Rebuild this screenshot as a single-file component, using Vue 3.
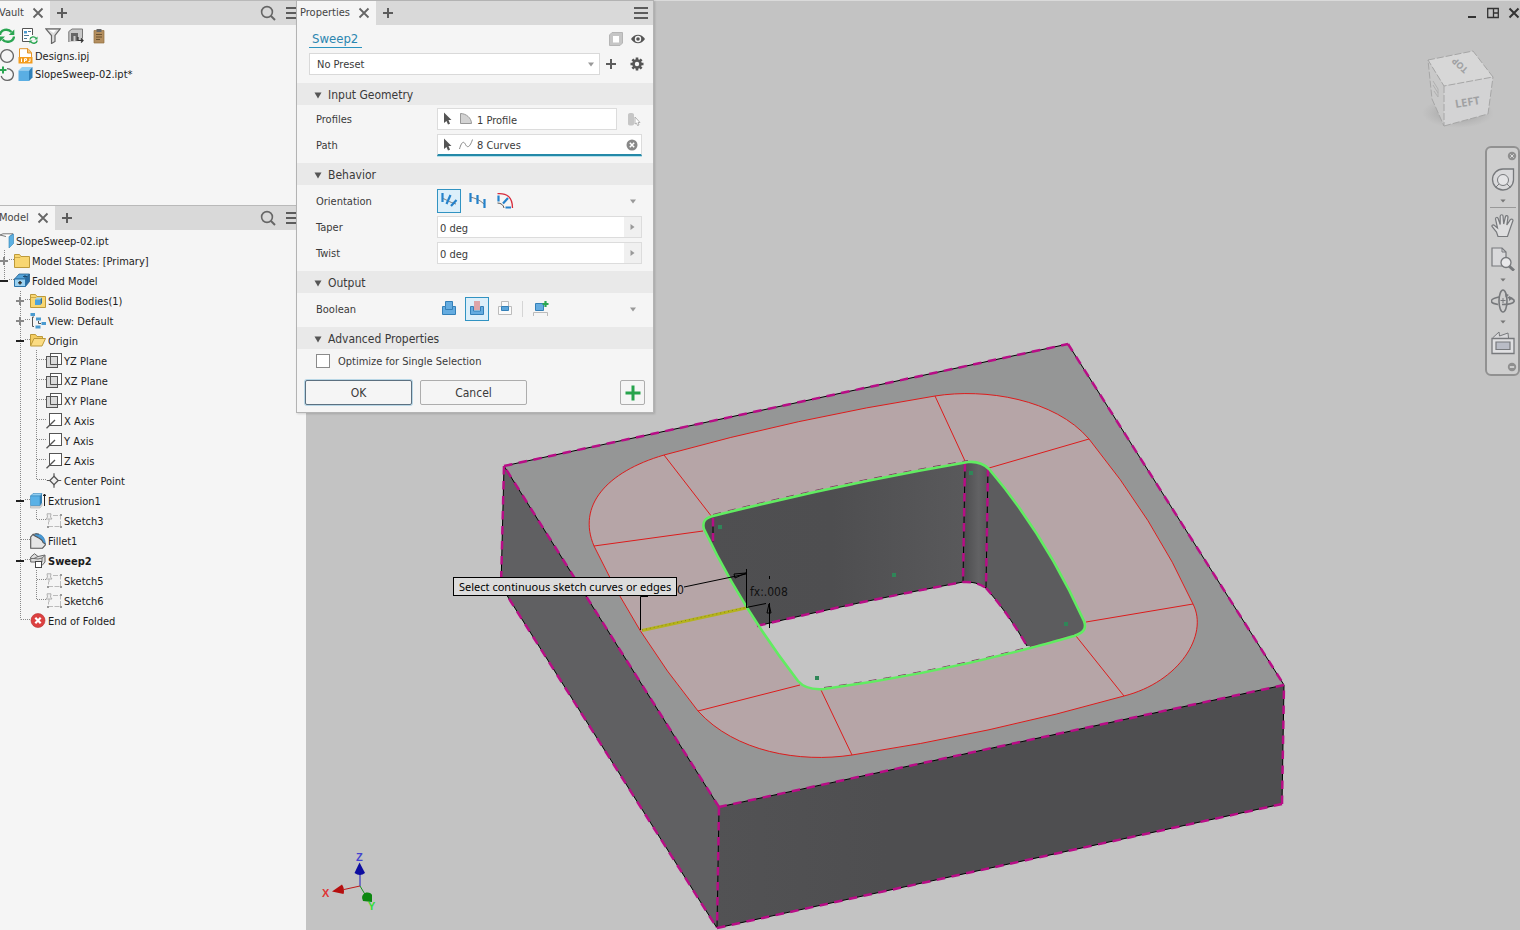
<script setup>
import { ref } from 'vue'

const preset = ref('No Preset')
const taper = ref('0 deg')
const twist = ref('0 deg')
const optimize = ref(false)
const orientation = ref('follow')
const operation = ref('cut')

const tree = [
  { level: 0, icon: 'part', label: 'SlopeSweep-02.ipt' },
  { level: 1, icon: 'folder', label: 'Model States: [Primary]', mark: 'plus' },
  { level: 1, icon: 'folded', label: 'Folded Model', mark: 'minus' },
  { level: 2, icon: 'bodies', label: 'Solid Bodies(1)', mark: 'plus' },
  { level: 2, icon: 'view', label: 'View: Default', mark: 'plus' },
  { level: 2, icon: 'open', label: 'Origin', mark: 'minus' },
  { level: 3, icon: 'plane', label: 'YZ Plane' },
  { level: 3, icon: 'plane', label: 'XZ Plane' },
  { level: 3, icon: 'plane', label: 'XY Plane' },
  { level: 3, icon: 'axis', label: 'X Axis' },
  { level: 3, icon: 'axis', label: 'Y Axis' },
  { level: 3, icon: 'axis', label: 'Z Axis' },
  { level: 3, icon: 'point', label: 'Center Point' },
  { level: 2, icon: 'extrude', label: 'Extrusion1', mark: 'minus' },
  { level: 3, icon: 'sketch', label: 'Sketch3' },
  { level: 2, icon: 'fillet', label: 'Fillet1' },
  { level: 2, icon: 'sweep', label: 'Sweep2', mark: 'minus', bold: true },
  { level: 3, icon: 'sketch', label: 'Sketch5' },
  { level: 3, icon: 'sketch', label: 'Sketch6' },
  { level: 2, icon: 'end', label: 'End of Folded' },
]

const edges = [
  'M504 466 1068 344',
  'M1068 344 1284 685',
  'M1284 685 719 807',
  'M719 807 504 466',
  'M504 466 501 586',
  'M501 586 717 928',
  'M719 807 717 928',
  'M717 928 1282 804',
  'M1282 804 1284 685',
]
const holeEdges = [
  'M757 626Q862 601 963 582Q976 581 986 588',
  'M986 588Q1008 613 1027 646',
  'M965 463 963 582',
  'M988 468 986 588',
  'M713 518V542',
]
const ribs = 'M664 455 712 517M594 546 703 531M935 396 965 461M1089 439 989 468M1193 604 1086 622M1076 636 1124 696M821 690 852 755M800 685 698 711'
const hole = 'M713 516Q845 483 968 462C978 461 984 464 989 469Q1045 535 1084 621C1087 629 1083 633 1074 636Q950 672 824 689C812 690 804 688 798 681Q741 607 704 529C702 522 705 518 713 516Z'
const band = 'M664 455Q797 418 935 396C985 388 1055 399 1089 439Q1155 520 1193 604C1209 635 1179 682 1124 696Q990 734 852 755C800 763 735 752 698 711Q634 632 594 546C577 506 606 472 664 455Z'
const points = [[720, 527], [971, 473], [894, 575], [1066, 624], [817, 678]]
</script>

<template>
  <div class="app">
    <svg class="defs" aria-hidden="true">
      <defs>
        <symbol id="close" viewBox="0 0 12 12"><path d="M1.5 1.5 10.5 10.5M10.5 1.5 1.5 10.5" fill="none" stroke="#666" stroke-width="1.8" /></symbol>
        <symbol id="add" viewBox="0 0 12 12"><path d="M6 1V11M1 6H11" fill="none" stroke="#5c5c5c" stroke-width="2" /></symbol>
        <symbol id="search" viewBox="0 0 16 16"><circle cx="7" cy="7" r="5.4" fill="none" stroke="#666" stroke-width="1.6" /><path d="M11 11 15 15" stroke="#666" stroke-width="2" /></symbol>
        <symbol id="menu" viewBox="0 0 14 14"><path d="M0 2H14M0 7H14M0 12H14" stroke="#5c5c5c" stroke-width="2" /></symbol>
        <symbol id="part" viewBox="0 0 16 16"><path d="M2 2 5 .8H15L12 3.500" fill="#fff" stroke="#777" stroke-width="1" /><path d="M2 2 8 3.500" stroke="#777" fill="none" /><path d="M11 3.500 15.500 1V10.500L11 15Z" fill="#5cb0e2" stroke="#2f83b7" stroke-width=".6" /></symbol>
        <symbol id="folder" viewBox="0 0 16 16"><path d="M.5 14.500V1.500H5.500L7 3.500H15.500V14.500Z" fill="#f8d671" stroke="#bd9a3a" /><path d="M1 4.500H6L7 3.500" fill="none" stroke="#bd9a3a" stroke-width=".7" /></symbol>
        <symbol id="folded" viewBox="0 0 16 16"><path d="M.5 6 5 1H15.500L11.500 6Z" fill="#55a3d8" stroke="#26618e" stroke-width=".8" /><path d="M11.500 6 15.500 1V8.500L11.500 13.500Z" fill="#286da5" stroke="#26618e" stroke-width=".8" /><path d="M.5 6H11.500V13.500H.5Z" fill="#9bd1f0" stroke="#2c73a8" /><path d="M6 8V11.600M4.200 9.800H7.800" stroke="#333" stroke-width="1.600" /><path d="M9 3.500H13M11 2V5" stroke="#1d4b70" /></symbol>
        <symbol id="bodies" viewBox="0 0 16 16"><use href="#folder" /><path d="M5 6.500 7 4.500H12L10.500 6.500Z" fill="#9ad1f1" /><path d="M5 6.500H10.500V12H5Z" fill="#4aa3de" /><path d="M10.500 6.500 12 4.500V10L10.500 12Z" fill="#2871aa" /></symbol>
        <symbol id="view" viewBox="0 0 16 16"><path d="M2.500 4V13.500H4M2.500 4H4M8.500 8V10.500H11" fill="none" stroke="#555" /><path d="M.5 0H5V3H.5ZM6 4.500H11V7.500H6ZM11.500 9H16V12H11.500ZM5.500 12.500H10.500V15.500H5.500Z" fill="#4b9bd0" /></symbol>
        <symbol id="open" viewBox="0 0 16 16"><path d="M.5 12.500V1.500H5.500L7 3.500H12.500V5.500" fill="#f4cd62" stroke="#bd9a3a" /><path d="M.5 13 4 5.500H15.500L12 13Z" fill="#fbdc83" stroke="#bd9a3a" /></symbol>
        <symbol id="plane" viewBox="0 0 16 16"><rect x="4.500" y=".5" width="11" height="11" fill="#fff" stroke="#555" /><rect x=".5" y="3.500" width="11" height="11" fill="#ccc" fill-opacity=".7" stroke="#555" /><path d="M4.500 4V11.500H11" fill="none" stroke="#555" /></symbol>
        <symbol id="axis" viewBox="0 0 16 16"><rect x="3.500" y=".5" width="12" height="12" fill="#fff" stroke="#555" /><path d="M.5 15.300 9 7" stroke="#555" stroke-width="1.300" /></symbol>
        <symbol id="point" viewBox="0 0 16 16"><path d="M8 3.300 12.200 7.500 8 11.700 3.800 7.500Z" fill="#eee" stroke="#555" stroke-width="1.300" /><path d="M8 .3V4M8 11V14.700M.8 7.500H4M12 7.500H15.200" stroke="#555" stroke-width="1.200" /></symbol>
        <symbol id="extrude" viewBox="0 0 16 16"><path d="M.5 15V13H10L12 10.500V12.500L10 15Z" fill="#ddd" stroke="#aaa" stroke-width=".6" /><path d="M.5 3 3 .5H12L10 3Z" fill="#91cdf0" stroke="#3386bd" stroke-width=".6" /><path d="M.5 3H10V12.500H.5Z" fill="#5ab1e6" stroke="#3386bd" stroke-width=".6" /><path d="M10 3 12 .5V10L10 12.500Z" fill="#307cb2" /><path d="M14.500 13V1M13.200 3 14.500 1 15.800 3" fill="none" stroke="#222" /></symbol>
        <symbol id="sketch" viewBox="0 0 16 16"><path d="M7 2.500H14.500V13.500H2.500V9" fill="none" stroke="#bbb" stroke-dasharray="5 1.500" /><path d="M1 .8H5L4.500 4 6 6H0L1.500 4ZM3 6V9" fill="#eee" stroke="#aaa" stroke-width=".9" /><path d="M14 1H16V3H14ZM14 13H16V15H14ZM1 13H3V15H1Z" fill="#999" /></symbol>
        <symbol id="fillet" viewBox="0 0 16 16"><path d="M6 .8C12 1 15 4.500 15.400 11L12.500 13.500C13 7 9 3 3 3Z" fill="#4999d5" stroke="#2b77af" stroke-width=".6" /><path d="M.7 15.200V4L3 1.500C4.500 4 12 5 13 9.500L15.300 11V12L12.500 15.200Z" fill="#e6e6e6" stroke="#555" stroke-width="1.100" /><path d="M3 1.500 6 .7 9 1.200" fill="none" stroke="#555" /></symbol>
        <symbol id="sweep" viewBox="0 0 16 16"><path d="M.7 9V4L4.500.7 8 3.500 15 2V9L12 12.500H7V9Z" fill="#ddd" stroke="#666" /><path d="M.7 5.500 4 5.500 8 6 12 5 15 2.500M12 5V9M4 5.500 8 3.500" fill="none" stroke="#666" stroke-width=".9" /><rect x="5.500" y="8.500" width="6" height="6" fill="#fff" stroke="#444" /></symbol>
        <symbol id="end" viewBox="0 0 16 16"><circle cx="8" cy="7.500" r="7" fill="#dc4040" stroke="#b92d2d" stroke-width=".6" /><path d="M5.300 4.800 10.700 10.200M10.700 4.800 5.300 10.200" stroke="#fff" stroke-width="2.200" /></symbol>
        <symbol id="cursor" viewBox="0 0 10 14"><path d="M1 .5 8.500 8H5.500L7 11.700 5 12.500 3.500 9 1 11Z" fill="#555" /></symbol>
        <symbol id="tiny-down" viewBox="0 0 8 5"><path d="M.5.5H7.500L4 4.500Z" fill="#777" /></symbol>
      </defs>
    </svg>

    <aside class="sidebar">
      <section class="panel vault" aria-label="Vault">
        <header class="tabs">
          <div class="tab">
            <span>Vault</span>
            <button aria-label="Close Vault"><svg class="s12"><use href="#close" /></svg></button>
          </div>
          <button class="new" aria-label="Add panel"><svg class="s12"><use href="#add" /></svg></button>
          <button class="push" aria-label="Search"><svg class="s16"><use href="#search" /></svg></button>
          <button aria-label="Menu"><svg class="s14"><use href="#menu" /></svg></button>
        </header>
        <div class="vault-tools">
          <button aria-label="Refresh">
            <svg class="s16" viewBox="0 0 16 16"><path d="M1 7C1.500 1.500 9 0 12.500 4M15 8.500C14.500 14 7 15.500 3.500 11.500" fill="none" stroke="#2aa652" stroke-width="2.400" /><path d="M15.300 1.500V7H9.800ZM.5 14V8.500H6Z" fill="#2aa652" /></svg>
          </button>
          <button aria-label="Update properties">
            <svg class="s16" viewBox="0 0 16 16"><path d="M8 13.500H.5V.5H10.500V7" fill="#fff" stroke="#555" /><path d="M2 3H5V5.500H2Z" fill="#4b9bd0" /><path d="M6 3.500H9M2 7.500H7M2 10.500H5" stroke="#4b7b98" /><path d="M8 11.500C8.500 8.500 12.500 8 14 10.300M15.300 12.500C14.500 15.800 10.500 16 9 13.800" fill="none" stroke="#2aa652" stroke-width="1.400" /><path d="M15.500 8.500V11.500H12.500ZM7.500 15.500V12.600H10.500Z" fill="#2aa652" /></svg>
          </button>
          <button aria-label="Filter">
            <svg class="s16" viewBox="0 0 16 16"><path d="M.8.8H15.200L10 7.500V13.500L6.500 15.500V7.500Z" fill="#ddd" stroke="#666" stroke-width="1.200" /><path d="M4 2H11L8.500 5Z" fill="#fff" /></svg>
          </button>
          <button aria-label="Place component">
            <svg class="s16" viewBox="0 0 16 16"><path d="M.8 14V3.500L4 1H14.500V10L12 13" fill="#c9c9c9" stroke="#777" /><path d="M3 13V5H10V13H7.500V8H5.500V13Z" fill="#666" /><path d="M10 9V12.500H15M13 10.500 15 12.500 13 14.500" fill="none" stroke="#333" stroke-width="1.200" /></svg>
          </button>
          <button aria-label="Clipboard">
            <svg class="s16" viewBox="0 0 16 16"><path d="M3 2.500H13V15H3Z" fill="#b38e5f" stroke="#94703f" stroke-width=".7" /><path d="M5.500 1H10.500V4H5.500Z" fill="#666" /><path d="M5 6.500H11M5 9H11M5 11.500H9" stroke="#6c5330" /></svg>
          </button>
        </div>
        <ul class="vault-files">
          <li>
            <svg class="s16" viewBox="0 0 16 16"><circle cx="9" cy="8" r="6.400" fill="none" stroke="#666" stroke-width="1.300" /></svg>
            <svg class="s16" viewBox="0 0 16 16"><path d="M1.500 9V.7H10L13.500 4.500V9" fill="#fff" stroke="#e2942a" /><path d="M9.500.7V5H13.500" fill="#f7c36d" stroke="#e2942a" /><path d="M.5 9H14.500V15.500H.5Z" fill="#f39c1d" /><path d="M3.500 10.500V14M6.500 14V10.700H8.500V12.300H6.500M12 10.500V13.600H10.300" fill="none" stroke="#fff" /></svg>
            <span>Designs.ipj</span>
          </li>
          <li>
            <svg class="s16" viewBox="0 0 16 16"><path d="M9 2.600C13 2.600 16 6 15.300 9.500C14 16 5 15.800 3.200 10" fill="none" stroke="#666" stroke-width="1.300" /><path d="M5 .5V7.500M1.500 4H8.500" stroke="#2aa652" stroke-width="2" /></svg>
            <svg class="s16" viewBox="0 0 16 16"><path d="M.5 4.500 4 1H14.500L11 4.500Z" fill="#93cff2" /><path d="M.5 4.500H11V15H.5Z" fill="#5aaee3" /><path d="M11 4.500 14.500 1V11.500L11 15Z" fill="#2f80b9" /></svg>
            <span>SlopeSweep-02.ipt*</span>
          </li>
        </ul>
      </section>

      <section class="panel model" aria-label="Model">
        <header class="tabs">
          <div class="tab">
            <span>Model</span>
            <button aria-label="Close Model"><svg class="s12"><use href="#close" /></svg></button>
          </div>
          <button class="new" aria-label="Add panel"><svg class="s12"><use href="#add" /></svg></button>
          <button class="push" aria-label="Search"><svg class="s16"><use href="#search" /></svg></button>
          <button aria-label="Menu"><svg class="s14"><use href="#menu" /></svg></button>
        </header>
        <div class="tree">
          <svg class="guides" width="60" height="400" viewBox="0 0 60 400" aria-hidden="true">
            <path d="M4.500 20V50M20.500 61V389.500M36.500 120V249.500M36.500 280V289.500M36.500 340V369.500M9 29.500H14M9 49.500H14M25 69.500H30M25 89.500H30M25 109.500H30M37 129.500H46M37 149.500H46M37 169.500H46M37 189.500H46M37 209.500H46M37 229.500H46M37 249.500H46M25 269.500H30M37 289.500H46M21 309.500H30M25 329.500H30M37 349.500H46M37 369.500H46M21 389.500H30" fill="none" stroke="#888" stroke-dasharray="1 1" />
          </svg>
          <ul>
            <li v-for="node in tree" :key="node.label" :class="['lv' + node.level, { bold: node.bold }]">
              <button v-if="node.mark" class="mark" :aria-label="'Toggle ' + node.label">
                <svg width="8" height="8" viewBox="0 0 8 8">
                  <path v-if="node.mark === 'plus'" d="M4 0V8M0 4H8" stroke="#888" stroke-width="2" />
                  <path v-else d="M0 4H8" stroke="#222" stroke-width="2" />
                </svg>
              </button>
              <span v-else class="nomark"></span>
              <svg class="s16"><use :href="'#' + node.icon" /></svg>
              <span class="label">{{ node.label }}</span>
            </li>
          </ul>
        </div>
      </section>
    </aside>

    <main class="viewport">
      <svg class="scene" viewBox="0 0 1214 930" preserveAspectRatio="xMinYMin meet" role="img" aria-label="Solid block with sloped sweep preview">
        <defs>
          <linearGradient id="wall" x1="0" x2="1"><stop offset="0" stop-color="#4f4f51" /><stop offset=".5" stop-color="#4e4e50" /><stop offset="1" stop-color="#59595b" /></linearGradient>
          <linearGradient id="bend" x1="0" x2="1"><stop offset="0" stop-color="#4c4c4e" /><stop offset=".6" stop-color="#626264" /><stop offset="1" stop-color="#565658" /></linearGradient>
          <linearGradient id="front" x1="0" x2="1"><stop offset="0" stop-color="#525254" /><stop offset=".3" stop-color="#4e4e50" /><stop offset="1" stop-color="#4e4e50" /></linearGradient>
          <clipPath id="opening"><path :d="hole" /></clipPath>
        </defs>
        <g transform="translate(-306 0)">
          <path d="M504 466 1068 344 1284 685 719 807Z" fill="#959696" />
          <path d="M504 466 719 807 717 928 501 586Z" fill="#606062" />
          <path d="M719 807 1284 685 1282 804 717 928Z" fill="url(#front)" />
          <path :d="band" fill="#b6a5a7" />
          <path :d="hole" fill="#c4c4c4" />
          <g clip-path="url(#opening)">
            <path d="M700 500 965 455 963 582Q862 601 757 626L700 530Z" fill="url(#wall)" />
            <path d="M965 455H989L986 588Q976 581 963 582Z" fill="url(#bend)" />
            <path d="M988 460 1100 620V650L1027 646Q1008 613 986 588Z" fill="#5c5c5e" />
          </g>
          <path :d="band + ribs" fill="none" stroke="#dc1c1c" />
          <g fill="none">
            <path v-for="e in edges" :key="e" :d="e" stroke="#000" />
            <path v-for="e in edges" :key="'m' + e" :d="e" stroke="#b80d86" stroke-width="2.500" stroke-dasharray="8.500 6.500" />
            <path v-for="e in holeEdges" :key="e" :d="e" stroke="#000" />
            <path v-for="e in holeEdges" :key="'m' + e" :d="e" stroke="#b80d86" stroke-width="2.500" stroke-dasharray="8.500 6.500" />
            <path d="M713 514.500Q845 481.500 968 460.500M824 687.500Q950 670.500 1074 634.500" stroke="#803060" stroke-dasharray="8 7" />
            <path :d="hole" stroke="#61ec61" stroke-width="2.600" />
          </g>
          <path d="M642 630.500 746 608" stroke="#b5b31d" stroke-width="3" />
          <path d="M642 630 746 607.500" stroke="#858513" stroke-dasharray="1 3" />
          <path d="M684 587 746 574M746.500 569V607M640.500 630V596.500H648M746 607.500 766 603.500M769.500 603V628M769.500 576V579M746 573 734 574 735 578ZM769 604 767 613H771Z" fill="none" stroke="#000" />
          <text x="750" y="596" class="dim">fx:.008</text>
          <text x="677" y="594" class="dim">0</text>
          <rect v-for="p in points" :key="p[0]" :x="p[0] - 2" :y="p[1] - 2" width="4" height="4" fill="#2f8658" />
        </g>
      </svg>

      <div class="hint" role="tooltip">Select continuous sketch curves or edges</div>

      <svg class="triad" width="64" height="64" viewBox="0 0 64 64" role="img" aria-label="Axis triad">
        <path d="M42 35V16" stroke="#1818c0" /><path d="M42 35 26 38.500" stroke="#c01818" /><path d="M42 35 48 45" stroke="#18901f" />
        <path d="M41.500 11.500 47 22Q42 26 36.500 22Z" fill="#0c0ca0" />
        <path d="M14 40.500 24 33.500Q27 38 25.500 43Z" fill="#b60f0f" />
        <path d="M54 51 45 50Q42 44 48 41.500 53 41 54 44Z" fill="#0c870f" />
        <text x="38" y="10" class="ax" fill="#4343d0">Z</text>
        <text x="4" y="46" class="ax" fill="#df3535">X</text>
        <text x="50" y="59" class="ax" fill="#35dd35">Y</text>
      </svg>

      <div class="windowing">
        <button aria-label="Minimize"><svg class="s12" viewBox="0 0 12 12"><path d="M2 10H10" stroke="#333" stroke-width="2" /></svg></button>
        <button aria-label="Restore"><svg class="s12" viewBox="0 0 12 12"><path d="M.7 1.500H11.300V10.500H.7ZM6.500 1.500V10.500M6.500 6H11" fill="none" stroke="#333" stroke-width="1.300" /></svg></button>
        <button aria-label="Close"><svg class="s12" viewBox="0 0 12 12"><path d="M1.500 1.500 10.500 10.500M10.500 1.500 1.500 10.500" stroke="#333" stroke-width="2" /></svg></button>
      </div>

      <svg class="cube" width="84" height="92" viewBox="0 0 84 92" role="img" aria-label="View cube">
        <defs>
          <radialGradient id="shade"><stop offset="0" stop-color="#8c8c8c" stop-opacity=".8" /><stop offset="1" stop-color="#a0a0a0" stop-opacity="0" /></radialGradient>
        </defs>
        <ellipse cx="38" cy="73" rx="36" ry="15" fill="url(#shade)" />
        <path d="M8 20 53 11 73 37 24 46Z" fill="#d7d7d7" /><path d="M8 20 24 46V86L12 59Z" fill="#c9c9c9" /><path d="M24 46 73 37 68 74 24 86Z" fill="#d3d3d4" />
        <path d="M8 20 53 11 73 37 24 46ZM24 46V86L12 59 8 20M24 86 68 74 73 37" fill="none" stroke="#a6a6a6" stroke-dasharray="7 2" />
        <text x="48" y="66" class="face" transform="rotate(-9 48 66)">LEFT</text>
        <text x="42" y="23" class="face top" transform="rotate(222 42 23)">TOP</text>
        <path d="M13 41 18 49V57L14 51M13 45 18 53" fill="none" stroke="#b0b0b0" />
      </svg>

      <nav class="navbar" aria-label="Navigation bar">
        <button class="edge" aria-label="Close navigation bar"><svg class="s10" viewBox="0 0 10 10"><circle cx="5" cy="5" r="4.200" fill="#8f8f8f" /><path d="M3.300 3.300 6.700 6.700M6.700 3.300 3.300 6.700" stroke="#ddd" /></svg></button>
        <button class="tool" aria-label="Full navigation wheel"><svg class="s24" viewBox="0 0 24 24"><path d="M12 1H22.500V12A10.500 10.500 0 1 1 12 1Z" fill="#d9d9db" stroke="#77797c" stroke-width="1.300" /><circle cx="12" cy="12" r="5.500" fill="#e4e4e6" stroke="#77797c" /><path d="M8 16 4.500 19.500M16 16 19.500 19.500" stroke="#77797c" /></svg></button>
        <button class="more" aria-label="Wheel options"><svg width="6" height="4"><use href="#tiny-down" /></svg></button>
        <hr />
        <button class="tool" aria-label="Pan"><svg class="s24" viewBox="0 0 24 24"><path d="M7 22.500 5.500 18 1 12.500C.5 11 2.500 10.500 3.500 11.500L6.500 14 4.500 5C4.500 3 6.800 3 7.200 4.800L9.200 10.500V2C9.500.3 12 .3 12 2L12.700 10 14.500 2.500C15 1 17.200 1.500 17 3.200L15.800 11 19.500 5.500C20.500 4.500 22.500 5.300 21.800 7L19 15 16.500 22.500Z" fill="#dededf" stroke="#77797c" stroke-width="1.200" /></svg></button>
        <button class="tool" aria-label="Zoom"><svg class="s24" viewBox="0 0 24 24"><path d="M1 1H11L15 5V19H1Z" fill="#d9d9db" stroke="#77797c" stroke-width="1.200" /><path d="M11 1V5H15" fill="none" stroke="#77797c" /><path d="M18 19 23 23.500" stroke="#77797c" stroke-width="3" /><circle cx="15" cy="15.500" r="5" fill="#e8e8ea" stroke="#77797c" stroke-width="1.300" /></svg></button>
        <button class="more" aria-label="Zoom options"><svg width="6" height="4"><use href="#tiny-down" /></svg></button>
        <button class="tool" aria-label="Orbit"><svg class="s24" viewBox="0 0 24 24"><ellipse cx="12" cy="12" rx="4" ry="11" fill="none" stroke="#77797c" stroke-width="1.600" /><path d="M8 8C-2 10-2 14 7 15.500M11 15.500C26 15.500 26 10 17 8.500" fill="none" stroke="#77797c" stroke-width="1.600" /><path d="M12 9V14M9.500 11.500H14.500" stroke="#77797c" /><path d="M14 4 18 6 14.500 8.500ZM18 12 22 9 18 7Z" fill="#77797c" /></svg></button>
        <button class="more" aria-label="Orbit options"><svg width="6" height="4"><use href="#tiny-down" /></svg></button>
        <button class="tool" aria-label="Look at"><svg class="s24" viewBox="0 0 24 24"><path d="M1.500 7 8 1 8.500 5 17 2 17.500 7" fill="#d9d9db" stroke="#77797c" /><path d="M1 7.500H23V22.500H1Z" fill="#e0e0e2" stroke="#77797c" stroke-width="1.300" /><path d="M5 11H19V18.500H5Z" fill="#b9bcc6" stroke="#77797c" stroke-width="1.200" /></svg></button>
        <button class="edge" aria-label="Collapse navigation bar"><svg class="s10" viewBox="0 0 10 10"><circle cx="5" cy="5" r="4.200" fill="#8f8f8f" /><path d="M2.800 5H7.200" stroke="#eee" stroke-width="1.300" /></svg></button>
      </nav>
    </main>

    <form class="dialog" aria-label="Properties" @submit.prevent>
      <header class="tabs">
        <div class="tab">
          <span>Properties</span>
          <button type="button" aria-label="Close Properties"><svg class="s12"><use href="#close" /></svg></button>
        </div>
        <button type="button" class="new" aria-label="Add panel"><svg class="s12"><use href="#add" /></svg></button>
        <button type="button" class="push" aria-label="Menu"><svg class="s14"><use href="#menu" /></svg></button>
      </header>

      <div class="title">
        <a href="#sweep2">Sweep2</a>
        <button type="button" aria-label="Show body"><svg class="s14" viewBox="0 0 14 14"><path d="M.5 3 3 .5H13.500V11L11 13.500H.5Z" fill="#c6c6c6" stroke="#b5b5b5" /><path d="M4 4H10V10.500H4Z" fill="#fff" /></svg></button>
        <button type="button" aria-label="Preview"><svg class="s14" viewBox="0 0 14 14"><path d="M0 7C3.500 1.300 10.500 1.300 14 7 10.500 12.700 3.500 12.700 0 7Z" fill="#555" /><circle cx="7" cy="7" r="3.200" fill="#f5f5f5" /><circle cx="7" cy="7" r="1.800" fill="#555" /></svg></button>
      </div>

      <div class="preset">
        <div class="select">
          <select v-model="preset" aria-label="Preset"><option>No Preset</option></select>
          <svg class="arrow" viewBox="0 0 8 5"><path d="M1 .5H7L4 4.500Z" fill="#999" /></svg>
        </div>
        <button type="button" aria-label="Save preset"><svg class="s12"><use href="#add" /></svg></button>
        <button type="button" aria-label="Settings"><svg class="s14" viewBox="0 0 14 14"><path d="M7 .5V13.500M.5 7H13.500M2.400 2.400 11.600 11.600M11.600 2.400 2.400 11.600" stroke="#555" stroke-width="2.600" /><circle cx="7" cy="7" r="4.800" fill="#555" /><circle cx="7" cy="7" r="2.200" fill="#f5f5f5" /></svg></button>
      </div>

      <section>
        <h2><button type="button"><svg viewBox="0 0 8 7"><path d="M.5.5H7.500L4 6.500Z" fill="#555" /></svg>Input Geometry</button></h2>
        <div class="rows">
          <div class="row">
            <label for="profiles">Profiles</label>
            <div class="field">
              <svg class="cur"><use href="#cursor" /></svg>
              <svg class="s14" viewBox="0 0 14 14"><path d="M1.500 1.500C7 1.500 12.500 6 12.500 11.500H1.500Z" fill="#d3d3d3" stroke="#999" /></svg>
              <input id="profiles" value="1 Profile" readonly />
            </div>
            <button type="button" class="side" aria-label="Select solid"><svg class="s14" viewBox="0 0 14 14"><path d="M1 2.500C1 .5 7 .5 7 2.500V12C7 14 1 14 1 12Z" fill="#c6c6c6" /><path d="M8 5 13 10.500H11L12 13 10.500 13.500 9.500 11 8 12Z" fill="#fff" stroke="#aaa" stroke-width=".9" /></svg></button>
          </div>
          <div class="row">
            <label for="path">Path</label>
            <div class="field active">
              <svg class="cur"><use href="#cursor" /></svg>
              <svg class="s14" viewBox="0 0 14 14"><path d="M.5 11C2.500 4 4.500 2.500 6.500 6.500S11 9 13.500 1.500" fill="none" stroke="#888" /></svg>
              <input id="path" value="8 Curves" readonly />
              <button type="button" aria-label="Clear path"><svg class="s12" viewBox="0 0 12 12"><circle cx="6" cy="6" r="5.500" fill="#888" /><path d="M3.800 3.800 8.200 8.200M8.200 3.800 3.800 8.200" stroke="#fff" stroke-width="1.500" /></svg></button>
            </div>
          </div>
        </div>
      </section>

      <section>
        <h2><button type="button"><svg viewBox="0 0 8 7"><path d="M.5.5H7.500L4 6.500Z" fill="#555" /></svg>Behavior</button></h2>
        <div class="rows roomy">
          <div class="row">
            <span class="name">Orientation</span>
            <div class="choices">
              <button type="button" :class="{ on: orientation === 'follow' }" aria-label="Follow path" @click="orientation = 'follow'"><svg class="s18" viewBox="0 0 18 18"><path d="M2 6C7 8 9 10 16 12" fill="none" stroke="#777" /><path d="M2.500 1V10M10.500 3 6.500 12M16.500 8 11 14" stroke="#2482cb" stroke-width="2.200" /></svg></button>
              <button type="button" :class="{ on: orientation === 'fixed' }" aria-label="Fixed" @click="orientation = 'fixed'"><svg class="s18" viewBox="0 0 18 18"><path d="M2 5C7 6 12 8 16 12" fill="none" stroke="#777" /><path d="M2.500 1V10M9.500 3V12M16.500 7V16" stroke="#2482cb" stroke-width="2.200" /></svg></button>
              <button type="button" :class="{ on: orientation === 'guide' }" aria-label="Guide" @click="orientation = 'guide'"><svg class="s18" viewBox="0 0 18 18"><path d="M1.500 1.700C11 1 16.500 5 16.500 16" fill="none" stroke="#d72d3d" stroke-width="1.300" /><path d="M1.500 11C5 11 7.500 13 8 16" fill="none" stroke="#555" /><path d="M2.500 3.500V9.500M12 6 7 11.500M9.500 15.500H15" stroke="#2482cb" stroke-width="2.200" /></svg></button>
            </div>
            <button type="button" class="arrow-btn" aria-label="More orientation options"><svg class="arrow" viewBox="0 0 8 5"><path d="M1 .5H7L4 4.500Z" fill="#999" /></svg></button>
          </div>
          <div class="row">
            <label for="taper">Taper</label>
            <div class="field value"><input id="taper" v-model="taper" /><button type="button" aria-label="Taper options"><svg width="5" height="8" viewBox="0 0 5 8"><path d="M.5 1V7L4.500 4Z" fill="#999" /></svg></button></div>
          </div>
          <div class="row">
            <label for="twist">Twist</label>
            <div class="field value"><input id="twist" v-model="twist" /><button type="button" aria-label="Twist options"><svg width="5" height="8" viewBox="0 0 5 8"><path d="M.5 1V7L4.500 4Z" fill="#999" /></svg></button></div>
          </div>
        </div>
      </section>

      <section>
        <h2><button type="button"><svg viewBox="0 0 8 7"><path d="M.5.5H7.500L4 6.500Z" fill="#555" /></svg>Output</button></h2>
        <div class="rows roomy">
          <div class="row">
            <span class="name">Boolean</span>
            <div class="choices">
              <button type="button" :class="{ on: operation === 'join' }" aria-label="Join" @click="operation = 'join'"><svg class="s18" viewBox="0 0 18 18"><path d="M2.500 6.500H5.500V1.500H12.500V6.500H15.500V14.500H2.500Z" fill="#65ace0" stroke="#3480b8" /><path d="M5.500 6.500V9.500H12.500V6.500" fill="none" stroke="#3480b8" /></svg></button>
              <button type="button" :class="{ on: operation === 'cut' }" aria-label="Cut" @click="operation = 'cut'"><svg class="s18" viewBox="0 0 18 18"><path d="M2.500 6.500H5.500V11H12.500V6.500H15.500V14.500H2.500Z" fill="#65ace0" stroke="#3480b8" /><path d="M6 1H12V10H6Z" fill="#dda4a8" /></svg></button>
              <button type="button" :class="{ on: operation === 'intersect' }" aria-label="Intersect" @click="operation = 'intersect'"><svg class="s18" viewBox="0 0 18 18"><path d="M2.500 6.500H15.500V14.500H2.500ZM5.500 6.500V1.500H12.500V6.500" fill="#fafafa" stroke="#bbb" /><path d="M5.500 6.500H12.500V10.500H5.500Z" fill="#5ba5da" stroke="#3480b8" /></svg></button>
              <i class="sep"></i>
              <button type="button" :class="{ on: operation === 'solid' }" aria-label="New solid" @click="operation = 'solid'"><svg class="s18" viewBox="0 0 18 18"><path d="M4.500 3.500H12.500V10.500H4.500Z" fill="#65ace0" stroke="#3480b8" /><path d="M14.500 1V7M11.500 4H17.500" stroke="#2aa652" stroke-width="2.200" /><path d="M2.500 16V12.500H16.500V16" fill="none" stroke="#bbb" /></svg></button>
            </div>
            <button type="button" class="arrow-btn" aria-label="More output options"><svg class="arrow" viewBox="0 0 8 5"><path d="M1 .5H7L4 4.500Z" fill="#999" /></svg></button>
          </div>
        </div>
      </section>

      <section>
        <h2><button type="button"><svg viewBox="0 0 8 7"><path d="M.5.5H7.500L4 6.500Z" fill="#555" /></svg>Advanced Properties</button></h2>
        <label class="check"><input v-model="optimize" type="checkbox" /><span>Optimize for Single Selection</span></label>
      </section>

      <footer>
        <button class="primary">OK</button>
        <button type="button">Cancel</button>
        <button type="button" class="apply" aria-label="Apply and create new"><svg class="s16" viewBox="0 0 16 16"><path d="M8 .5V15.500M.5 8H15.500" stroke="#27a34c" stroke-width="3" /></svg></button>
      </footer>
    </form>
  </div>
</template>

<style>
html, body { margin: 0; height: 100%; }
#app { height: 100%; }
</style>

<style scoped>
.app { position: relative; display: flex; min-height: 100%; overflow: hidden; background: #c3c3c3; color: #1c1c1c; font: 11px/16px "DejaVu Sans Condensed", Tahoma, "Noto Sans", sans-serif; }
.app * { box-sizing: border-box; }
svg { display: block; flex: none; }
button { display: flex; align-items: center; justify-content: center; padding: 0; border: 0; background: none; color: inherit; font: inherit; }
input, select { color: inherit; font: inherit; }
ul { margin: 0; padding: 0; list-style: none; }
.defs { position: absolute; width: 0; height: 0; }
.s10 { width: 10px; height: 10px; }
.s12 { width: 12px; height: 12px; }
.s14 { width: 14px; height: 14px; }
.s16 { width: 16px; height: 16px; }
.s18 { width: 18px; height: 18px; }
.s24 { width: 24px; height: 24px; }

.sidebar { display: flex; flex: none; flex-direction: column; width: 306px; overflow: hidden; background: #f5f5f5; }
.panel { border-top: 1px solid #b9b9b9; }
.vault { height: 205px; }
.model { flex: 1; }
.tabs { display: flex; align-items: center; height: 24px; padding-right: 6px; background: #d9d9d9; color: #444; }
.tab { display: flex; align-items: center; gap: 8px; height: 100%; padding-right: 6px; background: #f5f5f5; }
.sidebar .tab { margin-left: -1px; }
.new { margin-left: 6px; }
.push { margin-left: auto; }
.sidebar .push { margin-right: 10px; }
.vault-tools { display: flex; align-items: center; gap: 7px; height: 22px; margin-left: -1px; }
.vault-files li { display: flex; align-items: center; height: 18px; margin-left: -2px; }
.vault-files svg + svg { margin: 0 1px 0 4px; }
.vault-files span, .label, .row > label, .name, .check span { padding-top: 2px; }

.tree { position: relative; padding-top: 1px; }
.guides { position: absolute; top: 0; left: 0; }
.tree ul { position: relative; }
.tree li { display: flex; align-items: center; gap: 2px; height: 20px; white-space: nowrap; }
.lv0 { margin-left: -20px; }
.lv1 { margin-left: -4px; }
.lv2 { margin-left: 12px; }
.lv3 { margin-left: 28px; }
.bold { font-weight: bold; }
.mark, .nomark { flex: none; width: 16px; height: 16px; }

.viewport { position: relative; flex: 1; min-width: 0; border-top: 1px solid #dadada; }
.scene { position: absolute; top: -1px; left: 0; width: 100%; height: calc(100% + 1px); }
.dim { fill: #111; font: 12px "DejaVu Sans Condensed", sans-serif; }
.hint { position: absolute; top: 576px; left: 147px; height: 19px; padding: 0 5px; border: 1px solid #000; background: #dcdcdc; color: #000; font: 11px/18px "Noto Sans", sans-serif; white-space: nowrap; }
.triad { position: absolute; bottom: 15px; left: 12px; }
.ax { font: bold 11px "Liberation Sans", sans-serif; }
.windowing { position: absolute; top: 6px; right: 0; display: flex; gap: 9px; }
.cube { position: absolute; top: 39px; right: 16px; }
.face { fill: #a0a1a3; font: bold 11px "Noto Sans", sans-serif; text-anchor: middle; }
.top { font-size: 9px; }
.navbar { position: absolute; top: 145px; right: 0; display: flex; flex-direction: column; align-items: center; width: 35px; border: 2px solid #919191; border-radius: 6px; background: #cecece; }
.edge { align-self: flex-end; height: 15px; margin-right: 1px; }
.tool { height: 33px; padding: 4px 0; }
.more { height: 9px; }
.navbar hr { width: 26px; margin: 2px 0 1px; border: 0; border-top: 1px solid #999; }

.dialog { position: absolute; top: 0; left: 296px; width: 358px; border: 1px solid #b3b3b3; background: #f5f5f5; color: #3a3a3a; box-shadow: 1px 1px 2px rgba(0, 0, 0, .15); }
.dialog .tabs { padding-right: 5px; }
.dialog .tab { padding-left: 3px; }
.title { display: flex; align-items: center; gap: 8px; height: 28px; padding: 0 8px 0 12px; }
.title a { margin-right: auto; padding: 1px 4px 0 3px; border-bottom: 1px solid #2b93bf; color: #2b86b0; font-size: 13px; text-decoration: none; }
.preset { display: flex; align-items: center; gap: 5px; padding: 0 9px 8px 12px; }
.preset button:last-child { margin-left: 8px; }
.select { position: relative; flex: 1; }
.select select { display: block; width: 100%; height: 22px; padding: 1px 7px 0; border: 1px solid #d9d9d9; border-radius: 0; background: #fff; appearance: none; }
.arrow { width: 8px; height: 5px; }
.select .arrow { position: absolute; top: 9px; right: 5px; }
h2 { margin: 0; background: #e9e9e9; font-size: 12px; font-weight: normal; }
h2 button { gap: 6px; width: 100%; height: 22px; justify-content: flex-start; padding: 2px 0 0 17px; }
h2 svg { width: 8px; height: 7px; }
.rows { padding: 1px 11px 5px 19px; }
.roomy { padding-top: 3px; }
.row { display: flex; align-items: center; height: 26px; }
.row > label, .name { flex: none; width: 121px; }
.field { display: flex; flex: 1; align-items: center; height: 22px; padding-left: 5px; border: 1px solid #dcdcdc; background: #fff; }
.field input { flex: 1; min-width: 0; height: 20px; padding: 2px 0 0; border: 0; outline: 0; background: none; }
.cur { width: 10px; height: 14px; margin-right: 6px; }
.field .s14 { margin-right: 4px; }
.field.active { padding-right: 3px; border-bottom: 2px solid #2489a8; box-shadow: 0 1px #b5dfea; }
.side { margin-left: 8px; width: 17px; }
.field.value { padding-left: 2px; }
.value button { width: 17px; height: 20px; background: #f0f0f0; }
.choices { display: flex; gap: 4px; align-items: center; }
.choices button { width: 24px; height: 24px; border: 1px solid transparent; }
.choices .on { border-color: #3193c2; background: #dceffa; }
.sep { width: 1px; height: 16px; margin: 0 1px; background: #d5d5d5; }
.arrow-btn { width: 18px; height: 20px; margin-left: auto; }
.check { display: flex; align-items: center; gap: 8px; height: 24px; padding-left: 19px; }
.check input { width: 14px; height: 14px; margin: 0; border: 1px solid #8a8a8a; background: #fff; appearance: none; }
footer { display: flex; gap: 8px; padding: 7px 8px; }
footer button { width: 107px; height: 25px; border: 1px solid #adadad; border-radius: 2px; background: #f5f5f5; font-size: 12px; }
footer .primary { border-color: #5c7080; box-shadow: 0 0 0 1px #b9d7e6; }
footer .apply { width: 25px; margin-left: auto; }
</style>
